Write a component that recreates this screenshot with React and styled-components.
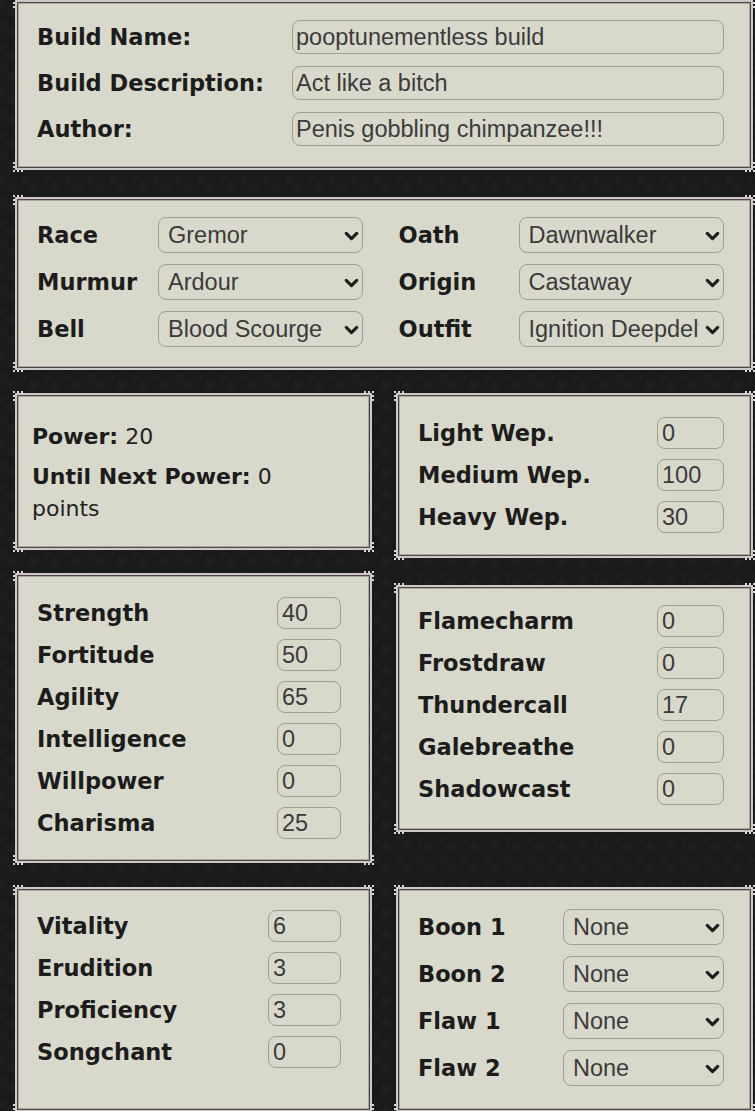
import React from "react";
import styled, { createGlobalStyle } from "styled-components";
import { ChevronDown } from "lucide-react";

const GlobalStyle = createGlobalStyle`
  html, body {
    margin: 0;
    padding: 0;
  }
  body {
    background-color: #1a1a1a;
    background-image:
      radial-gradient(circle at 50% 50%, rgba(255, 255, 255, 0.02) 0 30%, transparent 32% 100%),
      radial-gradient(circle at 0 0, rgba(255, 255, 255, 0.015) 0 22%, transparent 24% 100%);
    background-size: 22px 22px, 22px 22px;
    font-family: "DejaVu Sans", Verdana, sans-serif;
    color: #1c1c1c;
  }
`;

const Page = styled.main`
  padding: 0 2px 2px 15px;
  display: flex;
  flex-direction: column;
`;

const Card = styled.section`
  position: relative;
  box-sizing: border-box;
  background: #d9d9cb;
  border: 2px solid #cfc7c6;
  box-shadow: inset 0 0 0 1px #4d4646, inset 0 0 0 2px #aca4a2;
  padding: ${(p) => p.$pad || "22px 28px 22px 20px"};
  margin-top: ${(p) => p.$mt || 0}px;
  align-self: ${(p) => p.$align || "auto"};
`;

const Corner = styled.span`
  position: absolute;
  width: 8px;
  height: 8px;
  ${(p) => p.$v}: -4px;
  ${(p) => p.$h}: -4px;
  border-${(p) => p.$v}: 2px dotted #ddd5d4;
  border-${(p) => p.$h}: 2px dotted #ddd5d4;
`;

function Frame({ children, ...rest }) {
  return (
    <Card {...rest}>
      <Corner $v="top" $h="left" />
      <Corner $v="top" $h="right" />
      <Corner $v="bottom" $h="left" />
      <Corner $v="bottom" $h="right" />
      {children}
    </Card>
  );
}

const Label = styled.label`
  font-family: "DejaVu Sans", Verdana, sans-serif;
  font-weight: 700;
  font-size: 22.5px;
  color: #1c1c1c;
  white-space: nowrap;
`;

const InfoForm = styled.div`
  display: grid;
  grid-template-columns: 255px 1fr;
  row-gap: 12px;
  align-items: center;
`;

const TextInput = styled.input`
  box-sizing: border-box;
  width: 100%;
  height: ${(p) => p.$h || 34}px;
  margin: 0;
  padding: 0 ${(p) => p.$px || 3}px;
  background: transparent;
  border: 1.5px solid #a09f90;
  border-radius: 8px;
  font-family: "Liberation Sans", Arial, sans-serif;
  font-size: 23.5px;
  color: #3b3b3b;
  outline: none;
`;

const Split = styled.div`
  display: grid;
  grid-template-columns: 1fr 1fr;
  column-gap: 36px;
`;

const SelectGrid = styled.div`
  display: grid;
  grid-template-columns: ${(p) => p.$labelWidth}px 1fr;
  row-gap: 11px;
  align-items: center;
`;

const SelectWrap = styled.div`
  position: relative;
  height: 36px;
`;

const NativeSelect = styled.select`
  appearance: none;
  -webkit-appearance: none;
  box-sizing: border-box;
  width: 100%;
  height: 100%;
  margin: 0;
  padding: 0 24px 0 9px;
  background: transparent;
  border: 1.5px solid #a09f90;
  border-radius: 8px;
  font-family: "Liberation Sans", Arial, sans-serif;
  font-size: 23.5px;
  color: #3b3b3b;
  white-space: nowrap;
  overflow: hidden;
  text-overflow: clip;
  outline: none;
`;

const Chevron = styled(ChevronDown)`
  position: absolute;
  right: 1px;
  top: 50%;
  transform: translateY(-45%);
  pointer-events: none;
  color: #1e1e1e;
`;

function Select({ value, options }) {
  return (
    <SelectWrap>
      <NativeSelect defaultValue={value}>
        {options.map((o) => (
          <option key={o}>{o}</option>
        ))}
      </NativeSelect>
      <Chevron size={21} strokeWidth={3.6} />
    </SelectWrap>
  );
}

const Columns = styled.div`
  display: grid;
  grid-template-columns: 1fr 1fr;
  align-items: start;
  column-gap: 24px;
  row-gap: 15px;
  margin-top: 23px;
`;

const Para = styled.p`
  margin: 0;
  font-size: 22px;
  line-height: 32px;
  color: #222;
  & + & {
    margin-top: 8px;
  }
  b {
    color: #1c1c1c;
  }
`;

const StatList = styled.div`
  display: grid;
  grid-template-columns: 1fr ${(p) => p.$inputWidth}px;
  row-gap: 10px;
  align-items: center;
`;

function Stats({ rows, inputWidth }) {
  return (
    <StatList $inputWidth={inputWidth}>
      {rows.map(([name, val]) => (
        <React.Fragment key={name}>
          <Label>{name}</Label>
          <TextInput $h={32} $px={4} defaultValue={val} />
        </React.Fragment>
      ))}
    </StatList>
  );
}

export default function App() {
  const left = [
    ["Race", "Gremor", ["Gremor", "Human"]],
    ["Murmur", "Ardour", ["Ardour", "None"]],
    ["Bell", "Blood Scourge", ["Blood Scourge", "None"]],
  ];
  const right = [
    ["Oath", "Dawnwalker", ["Dawnwalker", "None"]],
    ["Origin", "Castaway", ["Castaway", "None"]],
    ["Outfit", "Ignition Deepdelver", ["Ignition Deepdelver", "None"]],
  ];
  const traits = ["Boon 1", "Boon 2", "Flaw 1", "Flaw 2"];

  return (
    <>
      <GlobalStyle />
      <Page>
        <Frame $pad="18px 27px 22px 20px">
          <InfoForm>
            <Label>Build Name:</Label>
            <TextInput defaultValue="pooptunementless build" />
            <Label>Build Description:</Label>
            <TextInput defaultValue="Act like a bitch" />
            <Label>Author:</Label>
            <TextInput defaultValue="Penis gobbling chimpanzee!!!" />
          </InfoForm>
        </Frame>

        <Frame $pad="18px 27px 21px 20px" $mt={27}>
          <Split>
            <SelectGrid $labelWidth={121}>
              {left.map(([name, val, opts]) => (
                <React.Fragment key={name}>
                  <Label>{name}</Label>
                  <Select value={val} options={opts} />
                </React.Fragment>
              ))}
            </SelectGrid>
            <SelectGrid $labelWidth={120}>
              {right.map(([name, val, opts]) => (
                <React.Fragment key={name}>
                  <Label>{name}</Label>
                  <Select value={val} options={opts} />
                </React.Fragment>
              ))}
            </SelectGrid>
          </Split>
        </Frame>

        <Columns>
          <Frame $pad="26px 45px 23px 15px">
            <Para>
              <b>Power:</b> <span>20</span>
            </Para>
            <Para>
              <b>Until Next Power:</b> <span>0</span> <span>points</span>
            </Para>
          </Frame>
          <Frame $pad="22px 27px 23px 20px">
            <Stats
              inputWidth={67}
              rows={[
                ["Light Wep.", "0"],
                ["Medium Wep.", "100"],
                ["Heavy Wep.", "30"],
              ]}
            />
          </Frame>

          <Frame $pad="22px 29px 22px 20px">
            <Stats
              inputWidth={64}
              rows={[
                ["Strength", "40"],
                ["Fortitude", "50"],
                ["Agility", "65"],
                ["Intelligence", "0"],
                ["Willpower", "0"],
                ["Charisma", "25"],
              ]}
            />
          </Frame>
          <Frame $pad="18px 27px 25px 20px" $mt={12}>
            <Stats
              inputWidth={67}
              rows={[
                ["Flamecharm", "0"],
                ["Frostdraw", "0"],
                ["Thundercall", "17"],
                ["Galebreathe", "0"],
                ["Shadowcast", "0"],
              ]}
            />
          </Frame>

          <Frame $pad="21px 29px 24px 20px" $mt={9} $align="stretch">
            <Stats
              inputWidth={73}
              rows={[
                ["Vitality", "6"],
                ["Erudition", "3"],
                ["Proficiency", "3"],
                ["Songchant", "0"],
              ]}
            />
          </Frame>
          <Frame $pad="20px 27px 24px 20px" $mt={9} $align="stretch">
            <SelectGrid $labelWidth={145}>
              {traits.map((t) => (
                <React.Fragment key={t}>
                  <Label>{t}</Label>
                  <Select value="None" options={["None"]} />
                </React.Fragment>
              ))}
            </SelectGrid>
          </Frame>
        </Columns>
      </Page>
    </>
  );
}
